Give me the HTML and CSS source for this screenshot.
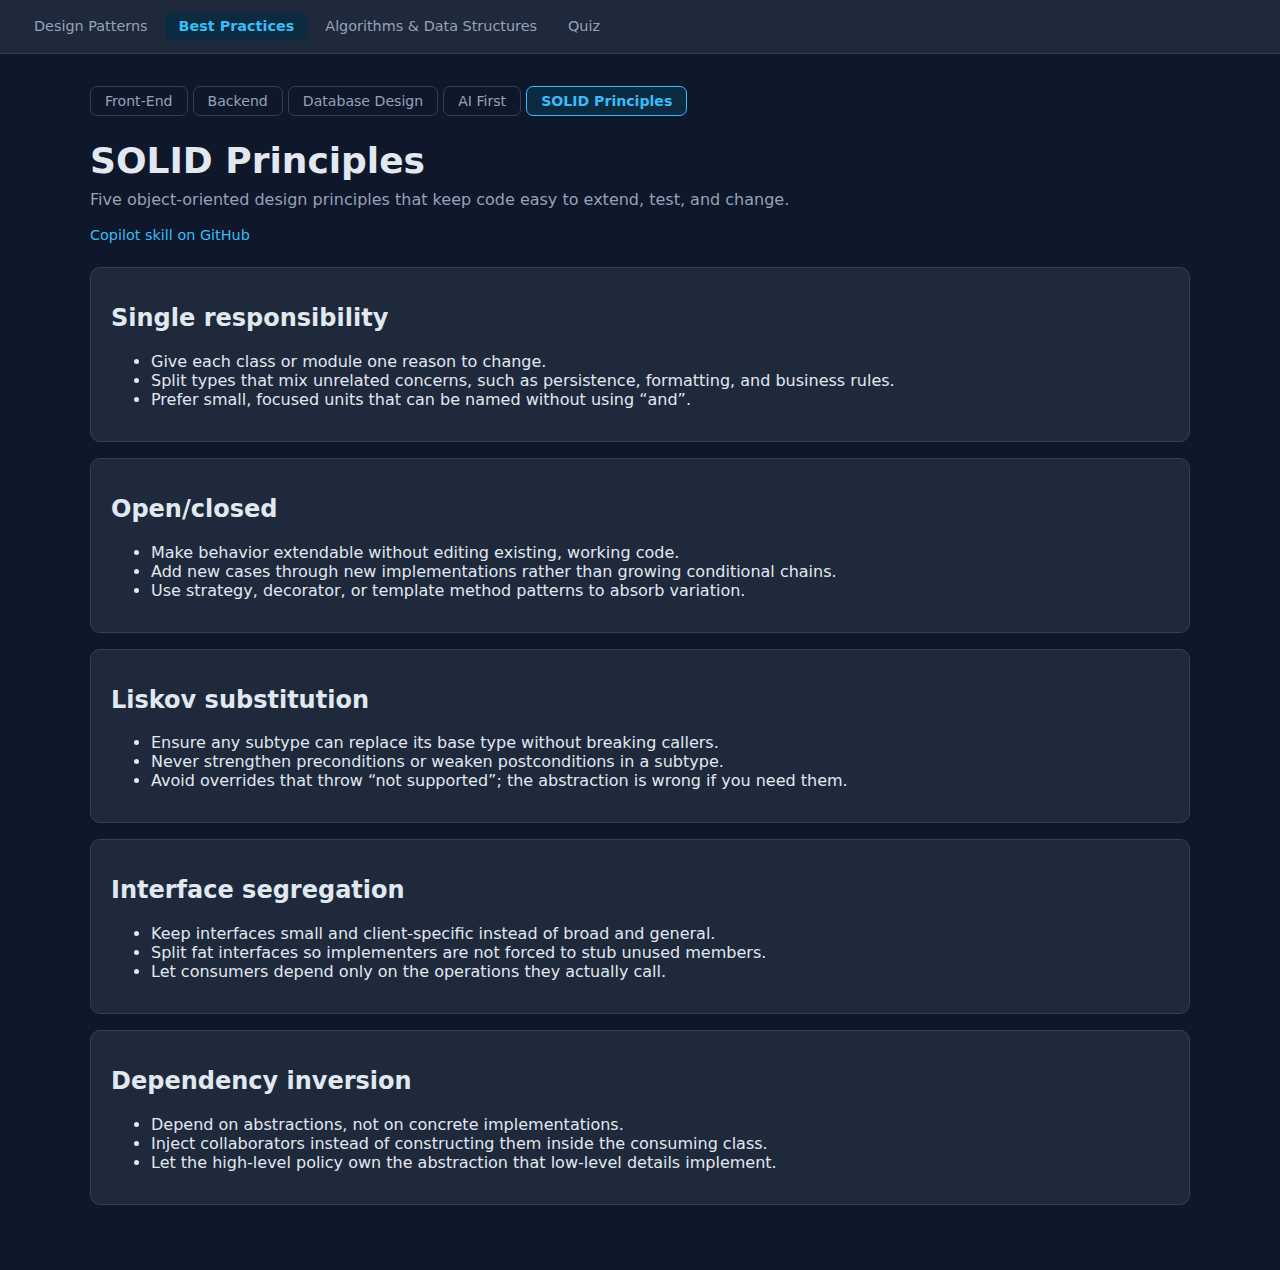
FILE: index.html
```html
<!DOCTYPE html>
<html lang="en">
<head>
<meta charset="utf-8">
<title>SOLID Principles</title>
<link rel="stylesheet" href="styles.css">
</head>
<body>
<header class="topbar">
  <nav class="topnav">
    <a class="topnav-item" href="#">Design Patterns</a>
    <a class="topnav-item is-active" href="#">Best Practices</a>
    <a class="topnav-item" href="#">Algorithms &amp; Data Structures</a>
    <a class="topnav-item" href="#">Quiz</a>
  </nav>
</header>
<main class="page">
  <div class="tabs">
    <a class="tab" href="#">Front-End</a>
    <a class="tab" href="#">Backend</a>
    <a class="tab" href="#">Database Design</a>
    <a class="tab" href="#">AI First</a>
    <a class="tab is-active" href="#">SOLID Principles</a>
  </div>
  <h1 class="title">SOLID Principles</h1>
  <p class="subtitle">Five object-oriented design principles that keep code easy to extend, test, and change.</p>
  <p class="source"><a class="source-link" href="#">Copilot skill on GitHub</a></p>

  <section class="cards">
    <article class="card">
      <h2 class="card-title">Single responsibility</h2>
      <ul class="card-list">
        <li>Give each class or module one reason to change.</li>
        <li>Split types that mix unrelated concerns, such as persistence, formatting, and business rules.</li>
        <li>Prefer small, focused units that can be named without using “and”.</li>
      </ul>
    </article>
    <article class="card">
      <h2 class="card-title">Open/closed</h2>
      <ul class="card-list">
        <li>Make behavior extendable without editing existing, working code.</li>
        <li>Add new cases through new implementations rather than growing conditional chains.</li>
        <li>Use strategy, decorator, or template method patterns to absorb variation.</li>
      </ul>
    </article>
    <article class="card">
      <h2 class="card-title">Liskov substitution</h2>
      <ul class="card-list">
        <li>Ensure any subtype can replace its base type without breaking callers.</li>
        <li>Never strengthen preconditions or weaken postconditions in a subtype.</li>
        <li>Avoid overrides that throw “not supported”; the abstraction is wrong if you need them.</li>
      </ul>
    </article>
    <article class="card">
      <h2 class="card-title">Interface segregation</h2>
      <ul class="card-list">
        <li>Keep interfaces small and client-specific instead of broad and general.</li>
        <li>Split fat interfaces so implementers are not forced to stub unused members.</li>
        <li>Let consumers depend only on the operations they actually call.</li>
      </ul>
    </article>
    <article class="card">
      <h2 class="card-title">Dependency inversion</h2>
      <ul class="card-list">
        <li>Depend on abstractions, not on concrete implementations.</li>
        <li>Inject collaborators instead of constructing them inside the consuming class.</li>
        <li>Let the high-level policy own the abstraction that low-level details implement.</li>
      </ul>
    </article>
  </section>
</main>
</body>
</html>
```

FILE: styles.css
```css
html, body {
  margin: 0;
  padding: 0;
}
body {
  background: #0f172a;
  color: #e2e8f0;
  font-family: "DejaVu Sans", Verdana, sans-serif;
  min-height: 1270px;
}
a {
  text-decoration: none;
}
.topbar {
  background: #1e293b;
  border-bottom: 1px solid #334155;
}
.topnav {
  display: flex;
  gap: 3px;
  padding: 12px 20px;
}
.topnav-item {
  font-size: 14.4px;
  color: #94a3b8;
  padding: 6px 14px;
  border-radius: 8px;
  line-height: 17px;
}
.topnav-item.is-active {
  background: #0c2a40;
  color: #38bdf8;
  font-weight: bold;
}
.page {
  max-width: 1100px;
  margin: 0 auto;
  padding: 32px 0 48px;
}
.tabs {
  display: flex;
  gap: 5px;
}
.tab {
  font-size: 14.1px;
  color: #94a3b8;
  padding: 6px 14px;
  border: 1px solid #334155;
  border-radius: 7px;
  line-height: 16px;
}
.tab.is-active {
  color: #38bdf8;
  border-color: #38bdf8;
  background: #0c2a40;
  font-weight: bold;
}
.title {
  font-size: 36px;
  font-weight: bold;
  margin: 24px 0 9px;
  color: #e2e8f0;
}
.subtitle {
  font-size: 16px;
  color: #94a3b8;
  margin: 0 0 18px;
}
.source {
  font-size: 14.4px;
  margin: 0 0 24px;
}
.source-link {
  color: #38bdf8;
}
.cards {
  display: flex;
  flex-direction: column;
  gap: 16px;
}
.card {
  background: #1e293b;
  border: 1px solid #334155;
  border-radius: 10px;
  padding: 16px 20px;
}
.card-title {
  font-size: 24px;
  font-weight: bold;
  margin: 0.83em 0;
  color: #e2e8f0;
}
.card-list {
  font-size: 16px;
  margin: 16px 0;
  padding-left: 40px;
  color: #e2e8f0;
}
```
